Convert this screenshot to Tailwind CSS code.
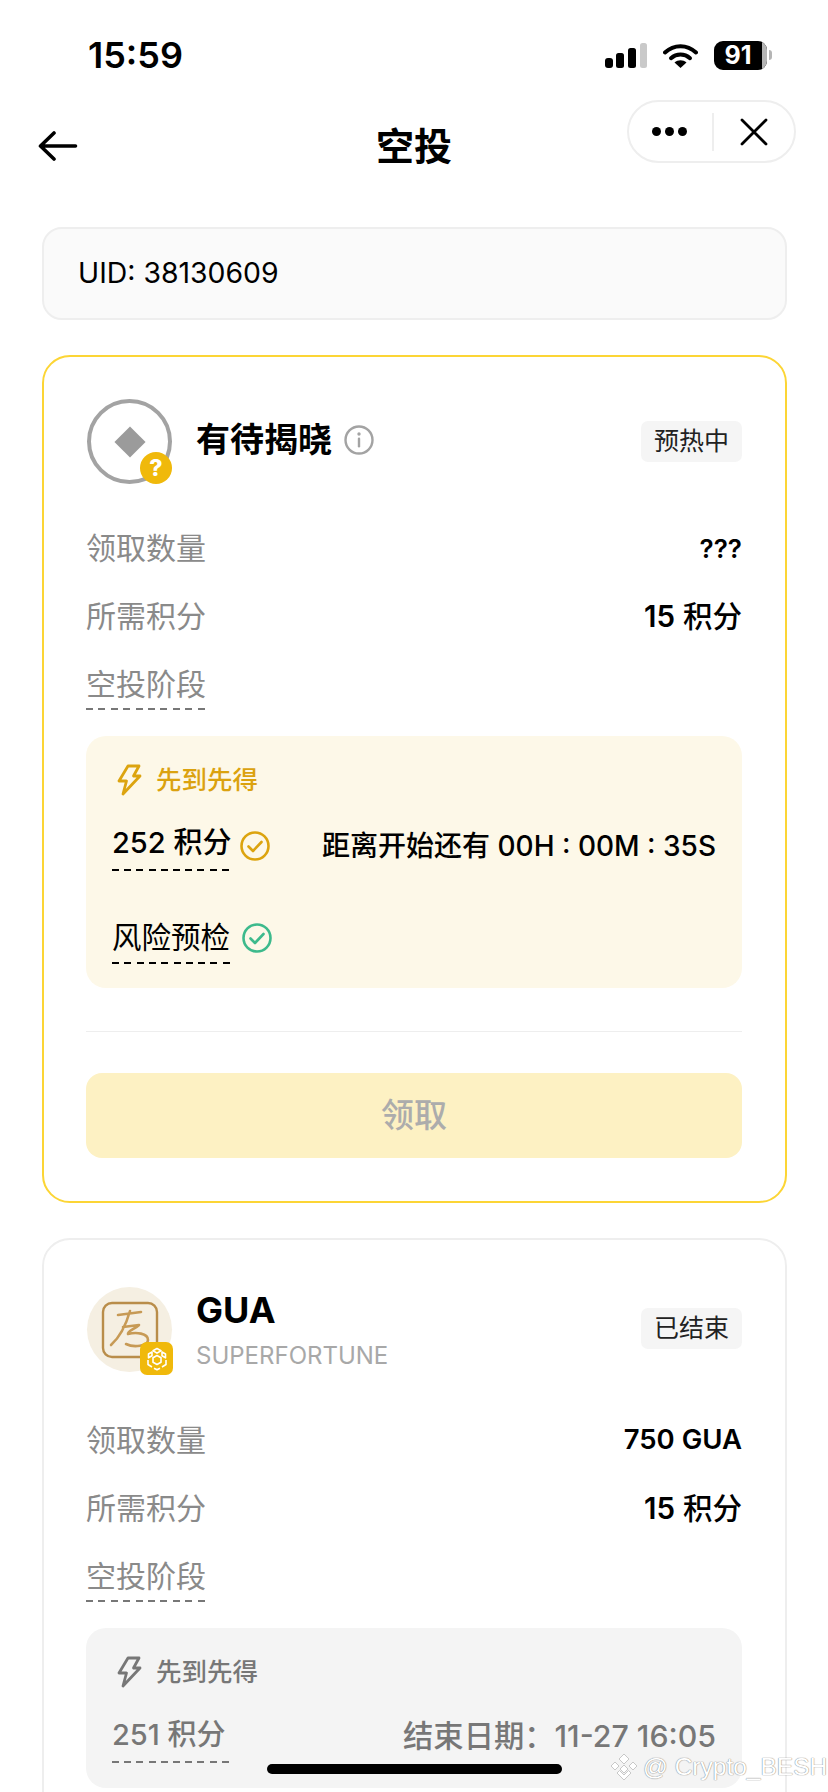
<!DOCTYPE html>
<html lang="zh">
<head>
<meta charset="utf-8">
<script src="https://cdn.jsdelivr.net/npm/@tailwindcss/browser@4"></script>
</head>
<body class="bg-white">
<div class="relative w-[828px] h-[1792px] overflow-hidden bg-white text-black font-['Inter','Noto_Sans_CJK_SC',sans-serif]">

  <!-- status bar -->
  <div class="h-[96px] flex items-start justify-between pl-[88px] pr-[56px] pt-[35px]">
    <span class="text-[36px] leading-[40px] font-semibold">15:59</span>
    <div class="flex items-center gap-[16px] h-[40px]">
      <svg width="42" height="25" viewBox="0 0 42 25"><rect x="0" y="15" width="8" height="10" rx="3" fill="#000"/><rect x="11" y="10" width="8" height="15" rx="2.5" fill="#000"/><rect x="23" y="5" width="8" height="20" rx="2.5" fill="#000"/><rect x="35" y="0" width="7" height="25" rx="2.5" fill="#c9c9c9"/></svg>
      <svg width="35" height="25" viewBox="0 0 35 25"><path d="M2 9.5C11 1 24 1 33 9.5" fill="none" stroke="#000" stroke-width="4" stroke-linecap="round"/><path d="M8 15.2C13.5 10.3 21.5 10.3 27 15.2" fill="none" stroke="#000" stroke-width="4" stroke-linecap="round"/><path d="M17.5 25L11.5 19.5C15 16.5 20 16.5 23.5 19.5Z" fill="#000"/></svg>
      <div class="flex items-center gap-[2px]">
        <div class="relative w-[53px] h-[29px] rounded-[9px] bg-black overflow-hidden flex items-center justify-center pr-[5px]">
          <span class="text-white text-[25px] leading-none font-bold">91</span>
          <div class="absolute right-0 top-0 bottom-0 w-[5px] bg-[#b5b5b5]"></div>
        </div>
        <div class="w-[3px] h-[10px] rounded-r-full bg-[#b5b5b5]"></div>
      </div>
    </div>
  </div>

  <!-- nav -->
  <div class="relative h-[100px] flex items-center justify-center">
    <svg class="absolute left-[38px] top-[35px]" width="40" height="30" viewBox="0 0 40 30"><path d="M37.5 15H3M16 2L2.5 15L16 28" fill="none" stroke="#000" stroke-width="3.6" stroke-linecap="round" stroke-linejoin="round"/></svg>
    <span class="text-[38px] leading-[44px] font-semibold">空投</span>
    <div class="absolute left-[627px] top-[4px] w-[169px] h-[63px] rounded-full border-2 border-[#eeeeee] bg-white flex items-center">
      <div class="w-[83px] flex items-center justify-center gap-[4px] pr-[3px]">
        <span class="w-[9px] h-[9px] rounded-full bg-black"></span>
        <span class="w-[9px] h-[9px] rounded-full bg-black"></span>
        <span class="w-[9px] h-[9px] rounded-full bg-black"></span>
      </div>
      <div class="w-[2px] h-[38px] bg-[#eeeeee]"></div>
      <div class="flex-1 flex items-center justify-center">
        <svg width="28" height="28" viewBox="0 0 28 28"><path d="M2 2L26 26M26 2L2 26" stroke="#000" stroke-width="2.8" stroke-linecap="round"/></svg>
      </div>
    </div>
  </div>

  <div class="pl-[42px] pr-[41px] flex flex-col">
    <!-- UID -->
    <div class="mt-[31px] h-[93px] rounded-[20px] border-2 border-[#eeeeee] bg-[#fafafa] flex items-center pl-[34px] text-[28.4px]">UID: 38130609</div>

    <!-- card 1 -->
    <div class="mt-[35px] h-[848px] rounded-[28px] border-2 border-[#fcd535] pl-[42px] pr-[43px] pt-[42px]">
      <div class="h-[85px] flex items-start">
        <div class="relative ml-[1px] w-[85px] h-[85px] rounded-full border-[4px] border-[#a3a3a3] flex items-center justify-center shrink-0">
          <div class="w-[22px] h-[22px] rotate-45 bg-[#9b9b9b]"></div>
          <div class="absolute left-[49px] top-[49px] w-[32px] h-[32px] rounded-full bg-[#f0b90b] flex items-center justify-center text-white text-[23px] leading-none font-extrabold">?</div>
        </div>
        <span class="ml-[24px] mt-[20px] text-[34px] leading-[42px] font-semibold">有待揭晓</span>
        <svg class="ml-[12px] mt-[26px]" width="30" height="30" viewBox="0 0 30 30"><circle cx="15" cy="15" r="13.5" fill="none" stroke="#a3a3a3" stroke-width="2.4"/><circle cx="15" cy="9" r="1.7" fill="#a3a3a3"/><rect x="13.8" y="12.5" width="2.4" height="10" rx="1.2" fill="#a3a3a3"/></svg>
        <div class="ml-auto mt-[22px] w-[101px] h-[41px] rounded-[7px] bg-[#f5f5f5] flex items-center justify-center text-[25px] text-[#222]">预热中</div>
      </div>

      <div class="mt-[42px] h-[44px] flex items-center justify-between">
        <span class="text-[30px] text-[#8a8a8a]">领取数量</span>
        <span class="text-[26px] font-semibold">???</span>
      </div>
      <div class="mt-[24px] h-[44px] flex items-center justify-between">
        <span class="text-[30px] text-[#8a8a8a]">所需积分</span>
        <span class="text-[29.5px] font-medium"><span class="font-semibold">15</span> 积分</span>
      </div>
      <div class="mt-[24px] w-[120px]">
        <div class="h-[44px] flex items-center text-[30px] text-[#8a8a8a] whitespace-nowrap">空投阶段</div>
        <div class="mt-[2px] h-[2px] bg-[repeating-linear-gradient(90deg,#777_0_7px,transparent_7px_12.4px)]"></div>
      </div>

      <!-- panel -->
      <div class="mt-[26px] h-[252px] rounded-[20px] bg-[#fdf8e8] pl-[26px] pr-[26px] pt-[28px]">
        <div class="h-[32px] flex items-center">
          <svg class="ml-[5px]" width="25" height="32" viewBox="0 0 25 32"><path d="M11 2H22L16.5 12H23L6 30L9.5 17H2Z" fill="none" stroke="#dca40f" stroke-width="2.8" stroke-linejoin="round"/></svg>
          <span class="ml-[14px] text-[25.5px] text-[#dba20f] font-medium">先到先得</span>
        </div>
        <div class="mt-[26px] flex items-start">
          <div class="w-[117px]">
            <div class="h-[42px] flex items-center text-[29px] font-medium whitespace-nowrap">252 积分</div>
            <div class="mt-[5px] h-[2px] bg-[repeating-linear-gradient(90deg,#000_0_7px,transparent_7px_12.2px)]"></div>
          </div>
          <svg class="ml-[11px] mt-[9px]" width="30" height="30" viewBox="0 0 30 30"><circle cx="15" cy="15" r="13.5" fill="none" stroke="#dca40f" stroke-width="2.6"/><path d="M8.5 15.5L13 20L21.5 11" fill="none" stroke="#dca40f" stroke-width="2.6" stroke-linecap="round" stroke-linejoin="round"/></svg>
          <span class="ml-auto h-[48px] flex items-center text-[28px] font-medium whitespace-nowrap">距离开始还有 00H : 00M : 35S</span>
        </div>
        <div class="mt-[45px] flex items-start">
          <div class="w-[118px]">
            <div class="h-[42px] flex items-center text-[29.5px] whitespace-nowrap">风险预检</div>
            <div class="mt-[4px] h-[2px] bg-[repeating-linear-gradient(90deg,#000_0_7px,transparent_7px_12.3px)]"></div>
          </div>
          <svg class="ml-[12px] mt-[7px]" width="30" height="30" viewBox="0 0 30 30"><circle cx="15" cy="15" r="13.5" fill="none" stroke="#3dba8c" stroke-width="2.6"/><path d="M8.5 15.5L13 20L21.5 11" fill="none" stroke="#3dba8c" stroke-width="2.6" stroke-linecap="round" stroke-linejoin="round"/></svg>
        </div>
      </div>

      <div class="mt-[43px] h-[1px] bg-[#eeeeee]"></div>
      <div class="mt-[41px] h-[85px] rounded-[16px] bg-[#fdf1c3] flex items-center justify-center text-[33px] font-medium text-[#acacac]">领取</div>
    </div>

    <!-- card 2 -->
    <div class="mt-[35px] h-[700px] rounded-[28px] border-2 border-[#eeeeee] pl-[42px] pr-[43px] pt-[47px]">
      <div class="h-[85px] flex items-start">
        <div class="relative ml-[1px] w-[85px] h-[85px] rounded-full bg-[#f5efe2] flex items-center justify-center shrink-0">
          <svg width="58" height="58" viewBox="0 0 58 58"><rect x="2" y="2" width="54" height="54" rx="9" fill="none" stroke="#b98d4a" stroke-width="2.4"/><path d="M17 14L40 11M29 10C25 24 19 36 10 44M22 26L38 24C34 28 26 30 27 33C35 31 47 32 47 39C47 45 33 47 25 43" fill="none" stroke="#c79a55" stroke-width="2.6" stroke-linecap="round" stroke-linejoin="round"/></svg>
          <div class="absolute left-[53px] top-[55px] w-[33px] h-[33px] rounded-[7px] bg-[#f0b90b] flex items-center justify-center">
            <svg width="24" height="24" viewBox="0 0 24 24" fill="none" stroke="#fff" stroke-width="1.6" stroke-linejoin="round"><path d="M12 1.5L16 3.8L12 6.1L8 3.8Z"/><path d="M3.5 7L7 5V8.800L3.5 10.800ZM20.5 7L17 5V8.800L20.500 10.800Z"/><path d="M12 8.500L16 10.800V15.200L12 17.500L8 15.200V10.800Z"/><path d="M3 13V17.500L7 20M21 13V17.500L17 20M9 21.200L12 22.800L15 21.200"/></svg>
          </div>
        </div>
        <div class="ml-[24px] flex flex-col">
          <span class="mt-[1px] text-[36px] leading-[44px] font-bold">GUA</span>
          <span class="mt-[1px] text-[24px] leading-[46px] text-[#a8a8a8]">SUPERFORTUNE</span>
        </div>
        <div class="ml-auto mt-[21px] w-[101px] h-[41px] rounded-[7px] bg-[#f5f5f5] flex items-center justify-center text-[25px] text-[#222]">已结束</div>
      </div>

      <div class="mt-[46px] h-[44px] flex items-center justify-between">
        <span class="text-[30px] text-[#8a8a8a]">领取数量</span>
        <span class="text-[27.5px] font-semibold">750 GUA</span>
      </div>
      <div class="mt-[24px] h-[44px] flex items-center justify-between">
        <span class="text-[30px] text-[#8a8a8a]">所需积分</span>
        <span class="text-[29.5px] font-medium"><span class="font-semibold">15</span> 积分</span>
      </div>
      <div class="mt-[24px] w-[120px]">
        <div class="h-[44px] flex items-center text-[30px] text-[#8a8a8a] whitespace-nowrap">空投阶段</div>
        <div class="mt-[2px] h-[2px] bg-[repeating-linear-gradient(90deg,#777_0_7px,transparent_7px_12.4px)]"></div>
      </div>

      <div class="mt-[26px] h-[160px] rounded-[20px] bg-[#f4f4f4] pl-[26px] pr-[26px] pt-[28px]">
        <div class="h-[32px] flex items-center">
          <svg class="ml-[5px]" width="25" height="32" viewBox="0 0 25 32"><path d="M11 2H22L16.5 12H23L6 30L9.5 17H2Z" fill="none" stroke="#777" stroke-width="2.8" stroke-linejoin="round"/></svg>
          <span class="ml-[14px] text-[25.5px] text-[#777] font-medium">先到先得</span>
        </div>
        <div class="mt-[26px] flex items-start">
          <div class="w-[117px]">
            <div class="h-[42px] flex items-center text-[29px] font-medium text-[#777] whitespace-nowrap">251 积分</div>
            <div class="mt-[5px] h-[2px] bg-[repeating-linear-gradient(90deg,#777_0_7px,transparent_7px_12.2px)]"></div>
          </div>
          <span class="ml-auto h-[46px] flex items-center text-[30.3px] font-medium text-[#777] whitespace-nowrap">结束日期：11-27 16:05</span>
        </div>
      </div>
    </div>
  </div>

  <!-- home indicator -->
  <div class="absolute left-[267px] top-[1764px] w-[295px] h-[10px] rounded-full bg-black"></div>

  <!-- watermark -->
  <div class="absolute left-[609px] top-[1752px] flex items-center gap-[4px] font-['Liberation_Sans',sans-serif] text-[24.5px] leading-[30px] text-white [text-shadow:0_0_1px_#888,0_0_1px_#888]">
    <svg width="30" height="30" viewBox="0 0 30 30" fill="#fff" stroke="#bbb" stroke-width="0.8"><path d="M15 2L20 7L15 12L10 7Z"/><path d="M6 10L10 14L6 18L2 14Z"/><path d="M24 10L28 14L24 18L20 14Z"/><path d="M15 13L19 17L15 21L11 17Z"/><path d="M15 28L8 21L10.5 18.5L15 23L19.5 18.5L22 21Z"/></svg>
    <span class="whitespace-nowrap">@ Crypto_BESH</span>
  </div>
</div>
</body>
</html>
